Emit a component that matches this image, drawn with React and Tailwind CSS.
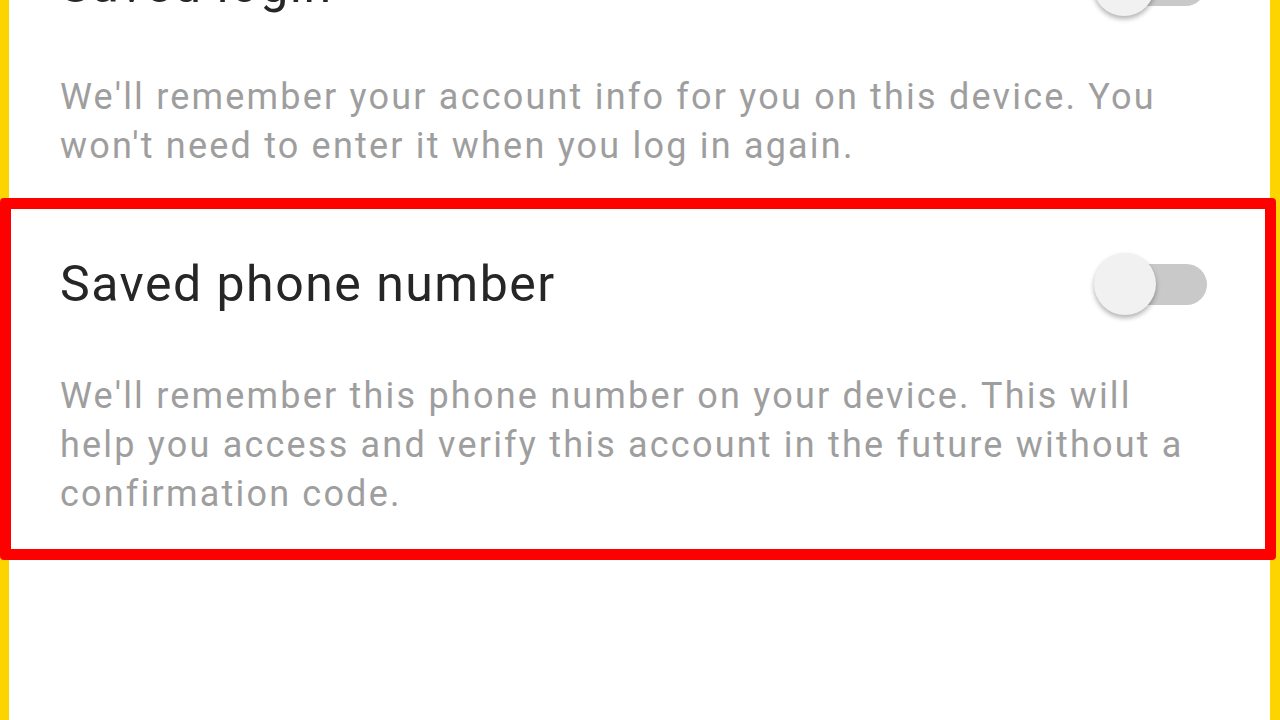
import React from "react";

function Toggle() {
  return (
    <div className="relative -my-[6px] flex h-[62px] w-[113px] shrink-0 items-center">
      <div className="ml-[7px] h-[41px] w-[106px] rounded-full bg-[#c9c9c9]" />
      <div className="absolute left-0 top-0 h-[62px] w-[62px] rounded-full bg-[#f1f1f1] shadow-[0_3px_5px_rgba(0,0,0,0.3)]" />
    </div>
  );
}

function Setting({ title, desc }) {
  return (
    <div className="flex flex-col">
      <div className="flex h-[50px] items-center justify-between">
        <div className="text-[50px] leading-[50px] tracking-[1.5px] text-[#262626]">{title}</div>
        <Toggle />
      </div>
      <p className="mt-[63px] w-[1145px] text-[36px] leading-[49px] tracking-[2.2px] text-[#9e9e9e]">{desc}</p>
    </div>
  );
}

export default function App() {
  return (
    <div
      className="h-[720px] w-[1280px] overflow-hidden bg-white"
      style={{ fontFamily: "Roboto, 'Noto Sans', sans-serif" }}
    >
      <div className="h-[760px] -mt-[40px] border-l-[9px] border-r-[10px] border-[#fcd400]">
        <div className="pl-[51px] pr-[64px]">
          <Setting
            title="Saved login"
            desc="We'll remember your account info for you on this device. You won't need to enter it when you log in again."
          />
        </div>
        <div className="-ml-[9px] -mr-[6px] mt-[27px] rounded-[4px] border-[11px] border-[#ff0000] pb-[30px] pl-[49px] pr-[58px] pt-[50px]">
          <Setting
            title="Saved phone number"
            desc="We'll remember this phone number on your device. This will help you access and verify this account in the future without a confirmation code."
          />
        </div>
      </div>
    </div>
  );
}
